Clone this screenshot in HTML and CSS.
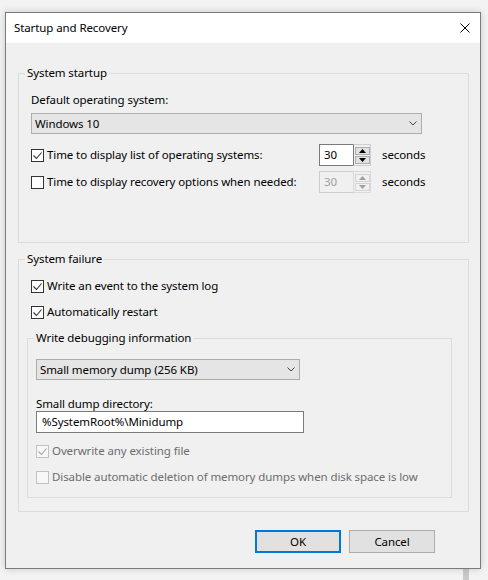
FILE: index.html
```html
<!DOCTYPE html>
<html lang="en">
<head>
<meta charset="utf-8">
<title>Startup and Recovery</title>
<link rel="stylesheet" href="styles.css">
</head>
<body>
<div class="desk-bar"></div>
<div class="window">
  <div class="titlebar">
    <span class="title">Startup and Recovery</span>
    <svg class="close" width="10" height="10" viewBox="0 0 10 10"><path d="M0.5 0.5 L9.5 9.5 M9.5 0.5 L0.5 9.5" stroke="#000" stroke-width="1" fill="none"/></svg>
  </div>
  <div class="content">
    <fieldset class="group startup">
      <legend>System startup</legend>
      <div class="label">Default operating system:</div>
      <div class="select os-select">
        <span>Windows 10</span>
        <svg class="chev" width="8" height="5" viewBox="0 0 8 5"><path d="M0.5 0.5 L4 4 L7.5 0.5" stroke="#444" stroke-width="1" fill="none"/></svg>
      </div>
      <div class="timers">
        <div class="check"><span class="box"><svg width="11" height="11" viewBox="0 0 11 11"><path d="M1.5 5.5 L4.5 8.5 L9.5 2.5" stroke="#333" stroke-width="1.1" fill="none"/></svg></span><span>Time to display list of operating systems:</span></div>
        <div class="spin">
          <span class="spin-val">30</span>
          <span class="spin-btns">
            <span class="sb"><svg width="7" height="4" viewBox="0 0 7 4"><path d="M0 4 L3.5 0 L7 4 Z" fill="#000"/></svg></span>
            <span class="sb"><svg width="7" height="4" viewBox="0 0 7 4"><path d="M0 0 L3.5 4 L7 0 Z" fill="#000"/></svg></span>
          </span>
        </div>
        <span class="unit">seconds</span>

        <div class="check"><span class="box"></span><span>Time to display recovery options when needed:</span></div>
        <div class="spin disabled">
          <span class="spin-val">30</span>
          <span class="spin-btns">
            <span class="sb"><svg width="7" height="4" viewBox="0 0 7 4"><path d="M0 4 L3.5 0 L7 4 Z" fill="#a0a0a0"/></svg></span>
            <span class="sb"><svg width="7" height="4" viewBox="0 0 7 4"><path d="M0 0 L3.5 4 L7 0 Z" fill="#a0a0a0"/></svg></span>
          </span>
        </div>
        <span class="unit">seconds</span>
      </div>
    </fieldset>

    <fieldset class="group failure">
      <legend>System failure</legend>
      <div class="check row"><span class="box"><svg width="11" height="11" viewBox="0 0 11 11"><path d="M1.5 5.5 L4.5 8.5 L9.5 2.5" stroke="#333" stroke-width="1.1" fill="none"/></svg></span><span>Write an event to the system log</span></div>
      <div class="check row gap"><span class="box"><svg width="11" height="11" viewBox="0 0 11 11"><path d="M1.5 5.5 L4.5 8.5 L9.5 2.5" stroke="#333" stroke-width="1.1" fill="none"/></svg></span><span>Automatically restart</span></div>

      <fieldset class="group debug">
        <legend>Write debugging information</legend>
        <div class="select dump-select">
          <span>Small memory dump (256 KB)</span>
          <svg class="chev" width="8" height="5" viewBox="0 0 8 5"><path d="M0.5 0.5 L4 4 L7.5 0.5" stroke="#444" stroke-width="1" fill="none"/></svg>
        </div>
        <div class="label dir-label">Small dump directory:</div>
        <div class="textbox">%SystemRoot%\Minidump</div>
        <div class="check row gap disabled"><span class="box"><svg width="11" height="11" viewBox="0 0 11 11"><path d="M1.5 5.5 L4.5 8.5 L9.5 2.5" stroke="#a8a8a8" stroke-width="1.1" fill="none"/></svg></span><span>Overwrite any existing file</span></div>
        <div class="check row gap disabled"><span class="box"></span><span>Disable automatic deletion of memory dumps when disk space is low</span></div>
      </fieldset>
    </fieldset>

    <div class="buttons">
      <button class="btn default">OK</button>
      <button class="btn">Cancel</button>
    </div>
  </div>
</div>
</body>
</html>
```

FILE: styles.css
```css
* { box-sizing: border-box; }

html, body {
  margin: 0;
  padding: 0;
}

body {
  width: 488px;
  height: 580px;
  background: #f3f3f3;
  font-family: "Noto Sans", "Open Sans", sans-serif;
  font-size: 11.5px;
  letter-spacing: -0.1px;
  line-height: 16px;
  color: #000;
  overflow: hidden;
  position: relative;
}

.desk-bar {
  position: absolute;
  left: 463px;
  top: 560px;
  width: 6px;
  height: 20px;
  background: #c9c9c9;
}

.window {
  position: relative;
  margin: 12px 0 0 5px;
  width: 476px;
  height: 557px;
  border: 1px solid #7b7b7b;
  background: #f0f0f0;
  box-shadow: 0 0 7px rgba(0, 0, 0, 0.18);
  display: flex;
  flex-direction: column;
}

.titlebar {
  height: 30px;
  background: #fff;
  display: flex;
  align-items: center;
  justify-content: space-between;
  padding: 0 10px 0 8px;
}

.close {
  display: block;
}

.content {
  padding: 0 11px 0 12px;
  display: flex;
  flex-direction: column;
}

.group {
  margin: 0;
  border: 1px solid #dcdcdc;
  min-width: 0;
}

.group legend {
  padding: 0 2px;
  line-height: 16px;
}

.startup {
  margin-top: 22px;
  padding: 11px 12px 49px 12px;
}

.startup > legend,
.failure > legend {
  margin-left: -6px;
}

.failure {
  margin-top: 8px;
  padding: 11px 12px 13px 12px;
}

.debug {
  margin: 10px 4px 0 -4px;
  padding: 13px 8px 12px 8px;
}

.debug > legend {
  margin-left: -2px;
}

.label {
  height: 16px;
}

.select {
  height: 21px;
  margin-top: 5px;
  background: #e5e5e5;
  border: 1px solid #adadad;
  display: flex;
  align-items: center;
  justify-content: space-between;
  padding: 0 4px 0 3px;
}

.os-select { width: 391px; }
.dump-select { width: 264px; margin-top: 0; }

.chev { display: block; }

.timers {
  margin-top: 10px;
  display: grid;
  grid-template-columns: 288px 52px auto;
  grid-auto-rows: 22px;
  row-gap: 5px;
  align-items: center;
}

.check {
  display: flex;
  align-items: center;
  gap: 3px;
  white-space: nowrap;
}

.check.row { height: 16px; }
.check.gap { margin-top: 10px; }

.box {
  width: 13px;
  height: 13px;
  border: 1px solid #333;
  background: #fff;
  flex: none;
  display: flex;
  align-items: center;
  justify-content: center;
}

.box svg { display: block; }

.check.disabled { color: #6d6d6d; }
.check.disabled .box {
  border-color: #c2c2c2;
  background: #f7f7f7;
}

.spin {
  height: 22px;
  display: flex;
  align-items: stretch;
}

.spin-val {
  width: 35px;
  border: 1px solid #7a7a7a;
  background: #fff;
  padding-left: 4px;
  display: flex;
  align-items: center;
}

.spin-btns {
  width: 18px;
  margin-left: -1px;
  border: 1px solid #cfcfcf;
  border-left-color: #7a7a7a;
  background: #f0f0f0;
  display: flex;
  flex-direction: column;
  gap: 1px;
  padding: 2px 0 1px 1px;
}

.sb {
  flex: 1;
  width: 15px;
  background: #e1e1e1;
  border: 1px solid #adadad;
  display: flex;
  align-items: center;
  justify-content: center;
}

.sb svg { display: block; }

.spin.disabled .spin-val {
  border-color: #cccccc;
  background: #f0f0f0;
  color: #a0a0a0;
}

.spin.disabled .spin-btns {
  border-color: #d9d9d9;
}

.spin.disabled .sb {
  background: #f0f0f0;
  border-color: #d4d4d4;
}

.unit {
  white-space: nowrap;
  margin-left: 11px;
}

.dir-label {
  margin-top: 16px;
  height: 15px;
  line-height: 15px;
}

.textbox {
  width: 268px;
  height: 22px;
  border: 1px solid #7a7a7a;
  background: #fff;
  padding-left: 5px;
  display: flex;
  align-items: center;
}

.buttons {
  margin-top: 18px;
  display: flex;
  justify-content: flex-end;
  gap: 8px;
  padding-right: 34px;
}

.btn {
  width: 86px;
  height: 23px;
  background: #e1e1e1;
  border: 1px solid #adadad;
  font-family: inherit;
  font-size: 11.5px;
  letter-spacing: -0.1px;
  color: #000;
  padding: 0;
}

.btn.default {
  border: 2px solid #0078d7;
}
```
